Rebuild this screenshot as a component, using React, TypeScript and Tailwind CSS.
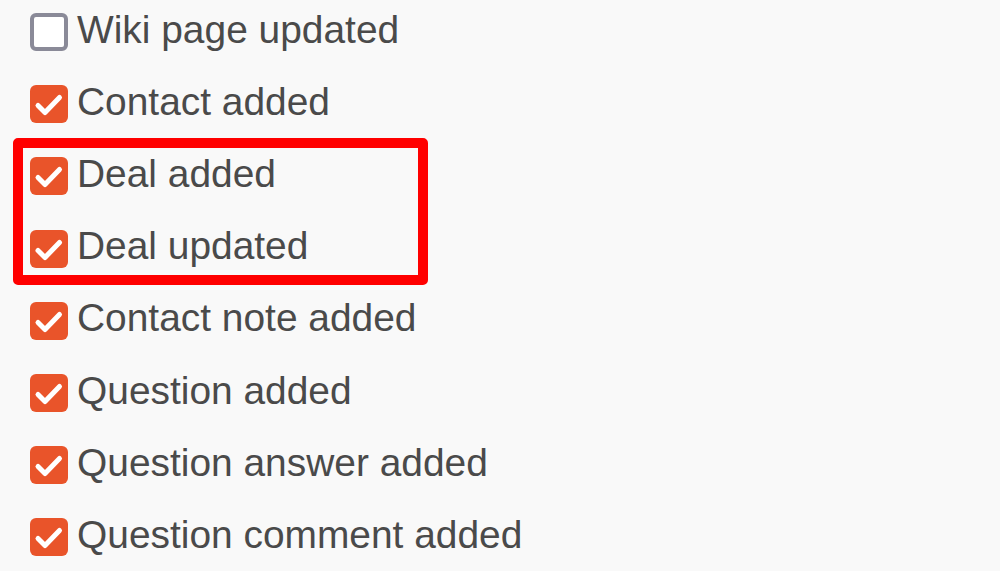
const items: { label: string; checked: boolean }[] = [
  { label: "Wiki page updated", checked: false },
  { label: "Contact added", checked: true },
  { label: "Deal added", checked: true },
  { label: "Deal updated", checked: true },
  { label: "Contact note added", checked: true },
  { label: "Question added", checked: true },
  { label: "Question answer added", checked: true },
  { label: "Question comment added", checked: true },
];

function Checkbox({ checked }: { checked: boolean }) {
  if (!checked) {
    return (
      <span className="box-border h-[38px] w-[38px] shrink-0 rounded-[6px] border-[4.5px] border-[#8a8a98] bg-white" />
    );
  }

  return (
    <span className="flex h-[38px] w-[38px] shrink-0 items-center justify-center rounded-[6px] bg-[#e9542a]">
      <svg width="38" height="38" viewBox="0 0 38 38" fill="none">
        <path
          d="M8 20.5 L15 27.5 L29.5 12.5"
          stroke="white"
          strokeWidth="5"
          strokeLinecap="round"
          strokeLinejoin="round"
        />
      </svg>
    </span>
  );
}

export default function App() {
  return (
    <div className="relative h-[571px] w-[1000px] overflow-hidden bg-[#f9f9f9] font-['Liberation_Sans',Arial,sans-serif] text-[#4a4a4a]">
      <ul className="-mt-[4px] flex flex-col pl-[30px]">
        {items.map((item) => (
          <li key={item.label} className="flex h-[72.2px] items-center gap-[9px]">
            <Checkbox checked={item.checked} />
            <span className="mb-[4px] text-[38.9px] leading-none whitespace-nowrap">
              {item.label}
            </span>
          </li>
        ))}
      </ul>

      {/* highlight around the deal rows */}
      <div className="absolute left-[13px] top-[138px] h-[147px] w-[415px] rounded-[5px] border-[10px] border-[#ff0000]" />
    </div>
  );
}
